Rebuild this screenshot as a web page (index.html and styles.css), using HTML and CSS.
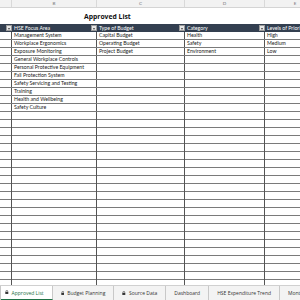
FILE: index.html
```html
<!DOCTYPE html>
<html lang="en">
<head>
    <meta charset="UTF-8">
    <title>Approved List</title>
    <link rel="stylesheet" href="styles.css">
</head>
<body>

    <div class="sheet">
        <!-- column letters -->
        <div class="row col-heads">
            <span></span><span>B</span><span>C</span><span>D</span><span>E</span>
        </div>

        <!-- title -->
        <div class="title-row">Approved List</div>

        <!-- table header -->
        <div class="row head-row">
            <span><i class="drop"></i></span>
            <span>HSE Focus Area<i class="drop"></i></span>
            <span>Type of Budget<i class="drop"></i></span>
            <span>Category<i class="drop"></i></span>
            <span>Levels of Priority</span>
        </div>

        <div class="row"><span></span><span>Management System</span><span>Capital Budget</span><span>Health</span><span>High</span></div>
        <div class="row"><span></span><span>Workplace Ergonomics</span><span>Operating Budget</span><span>Safety</span><span>Medium</span></div>
        <div class="row"><span></span><span>Exposure Monitoring</span><span>Project Budget</span><span>Environment</span><span>Low</span></div>
        <div class="row"><span></span><span>General Workplace Controls</span><span></span><span></span><span></span></div>
        <div class="row"><span></span><span>Personal Protective Equipment</span><span></span><span></span><span></span></div>
        <div class="row"><span></span><span>Fall Protection System</span><span></span><span></span><span></span></div>
        <div class="row"><span></span><span>Safety Servicing and Testing</span><span></span><span></span><span></span></div>
        <div class="row"><span></span><span>Training</span><span></span><span></span><span></span></div>
        <div class="row"><span></span><span>Health and Wellbeing</span><span></span><span></span><span></span></div>
        <div class="row"><span></span><span>Safety Culture</span><span></span><span></span><span></span></div>

        <!-- empty rows -->
        <div class="row filler"><span></span><span></span><span></span><span></span><span></span></div>
    </div>

    <!-- sheet tabs -->
    <div class="tabs">
        <div class="tab blank"></div>
        <div class="tab active"><svg class="lock" viewBox="0 0 6 7"><path d="M1.5 3V2a1.5 1.5 0 0 1 3 0v1" fill="none" stroke="currentColor" stroke-width="0.9"/><rect x="0.5" y="3" width="5" height="3.6" fill="currentColor"/></svg>Approved List</div>
        <div class="tab"><svg class="lock" viewBox="0 0 6 7"><path d="M1.5 3V2a1.5 1.5 0 0 1 3 0v1" fill="none" stroke="currentColor" stroke-width="0.9"/><rect x="0.5" y="3" width="5" height="3.6" fill="currentColor"/></svg>Budget Planning</div>
        <div class="tab"><svg class="lock" viewBox="0 0 6 7"><path d="M1.5 3V2a1.5 1.5 0 0 1 3 0v1" fill="none" stroke="currentColor" stroke-width="0.9"/><rect x="0.5" y="3" width="5" height="3.6" fill="currentColor"/></svg>Source Data</div>
        <div class="tab">Dashboard</div>
        <div class="tab">HSE Expenditure Trend</div>
        <div class="tab">Monthly</div>
    </div>

</body>
</html>
```

FILE: styles.css
```css
body {
    margin: 0;
    width: 300px;
    height: 300px;
    overflow: hidden;
    font-family: Lato, 'Open Sans', sans-serif;
    font-size: 5.2px;
    color: #222;
    background-color: white;
}

.sheet {
    height: 285px;
    overflow: hidden;
    display: flex;
    flex-direction: column;
}

.row {
    display: grid;
    grid-template-columns: 12px 85px 88px 80px 60px;
    height: 8px;
    flex-shrink: 0;
    border-bottom: 1px solid #7a7a7a;
    box-sizing: border-box;
}

.row span {
    border-right: 1px solid #555;
    padding-left: 2px;
    line-height: 7px;
    white-space: nowrap;
    overflow: hidden;
}

.row span:last-child {
    border-right: none;
}

.col-heads {
    height: 8px;
    background-color: #f2f2f2;
    border-bottom: 1px solid #d4d4d4;
    color: #777;
    font-size: 4.6px;
}

.col-heads span {
    border-right: 1px solid #d9d9d9;
    text-align: center;
    padding: 0;
    line-height: 7px;
}

.title-row {
    height: 16px;
    flex-shrink: 0;
    padding-left: 84px;
    font-family: 'Open Sans', sans-serif;
    font-size: 6.8px;
    font-weight: 700;
    line-height: 17px;
    color: #111;
}

.head-row {
    height: 8px;
    background-color: #333f50;
    color: white;
    border-bottom: none;
}

.head-row span {
    display: flex;
    align-items: center;
    border-right: none;
    line-height: 8px;
}

.drop {
    margin-left: auto;
    width: 6px;
    height: 6px;
    background-color: #e6e6e6;
    border: 1px solid #9a9a9a;
    box-sizing: border-box;
    position: relative;
    flex-shrink: 0;
}

.drop::after {
    content: '';
    position: absolute;
    left: 1px;
    top: 1.5px;
    border-left: 1.5px solid transparent;
    border-right: 1.5px solid transparent;
    border-top: 2px solid #444;
}

.filler {
    flex: 1;
    border-bottom: none;
    background: repeating-linear-gradient(to bottom, transparent 0, transparent 7px, #7a7a7a 7px, #7a7a7a 8px);
}

.tabs {
    height: 15px;
    display: flex;
    background-color: #f3f3f3;
    border-top: 1px solid #d0d0d0;
    box-sizing: border-box;
    font-family: 'Open Sans', sans-serif;
    font-size: 5px;
    color: #333;
}

.tab {
    display: flex;
    align-items: center;
    padding: 0 8px;
    border-right: 1px solid #c8c8c8;
    white-space: nowrap;
}

.tab.blank {
    width: 10px;
    padding: 0;
}

.tab.active {
    background-color: white;
    color: #1e7145;
    border-bottom: 1px solid #1e7145;
    padding: 0 8px 0 4px;
}

.lock {
    width: 3.6px;
    height: 4.2px;
    margin-right: 3px;
    color: #333;
}
```
